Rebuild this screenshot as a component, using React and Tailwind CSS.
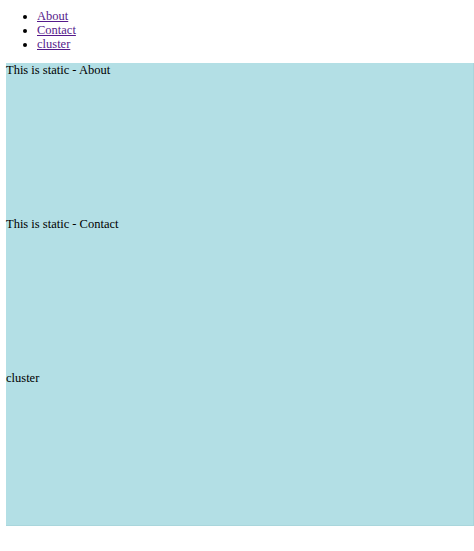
export default function App() {
  const links = ["About", "Contact", "cluster"];
  const sections = ["This is static - About", "This is static - Contact", "cluster"];
  return (
    <div className="min-h-[551px] bg-white pl-[6px] pt-px font-['Liberation_Serif',serif] text-[12.5px] leading-[14px] text-black">
      <ul className="mt-[8px] mb-[11.5px] list-disc pl-[31px]">
        {links.map((l) => (
          <li key={l}>
            <a href="#" className="text-[#551a8b] underline">
              {l}
            </a>
          </li>
        ))}
      </ul>
      <div className="border-r border-b border-[#a9d6dc] bg-[#b3dfe5]">
        {sections.map((s) => (
          <div key={s} className="h-[154px]">
            {s}
          </div>
        ))}
      </div>
    </div>
  );
}
